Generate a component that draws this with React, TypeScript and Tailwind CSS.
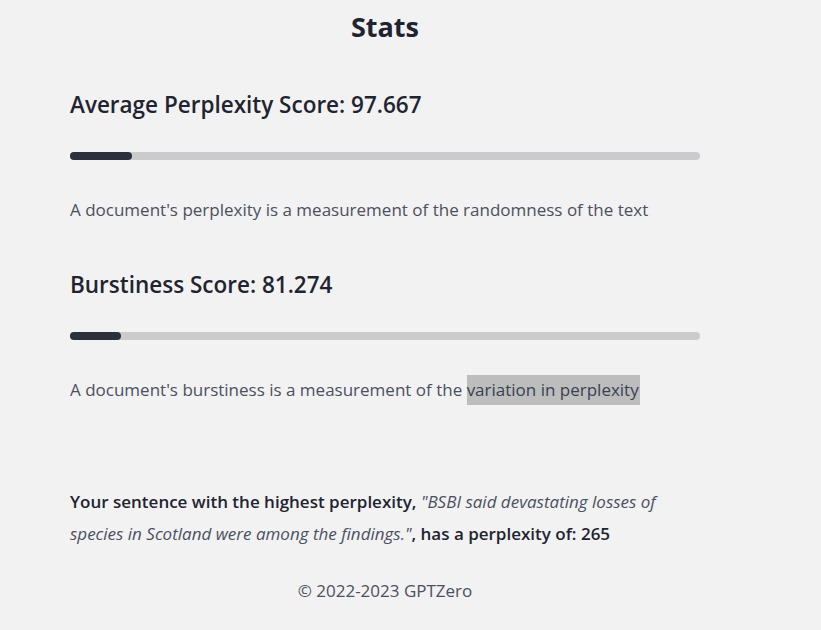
const STATS = [
  {
    label: 'Average Perplexity Score',
    value: '97.667',
    fill: 62,
    desc: "A document's perplexity is a measurement of the randomness of the text",
    mark: '',
  },
  {
    label: 'Burstiness Score',
    value: '81.274',
    fill: 51,
    desc: "A document's burstiness is a measurement of the ",
    mark: 'variation in perplexity',
  },
]

export default function App() {
  return (
    <div
      className="min-h-[630px] w-full bg-[#f2f2f2] text-[#1f2430]"
      style={{ fontFamily: '"Open Sans", "Noto Sans", sans-serif' }}
    >
      <div className="ml-[70px] w-[630px]">
        <h1 className="text-center text-[27px] font-bold leading-[54px]">Stats</h1>

        {STATS.map((s, i) => (
          <div key={s.label} className={i === 0 ? 'mt-[36px]' : 'mt-[45px]'}>
            <h2 className="text-[22.5px] font-semibold leading-[30px]">
              {s.label}: {s.value}
            </h2>
            {/* progress bar */}
            <div className="mt-[32px] h-[8px] w-full rounded-full bg-[#cbcbce]">
              <div className="h-full rounded-full bg-[#2c303c]" style={{ width: s.fill }} />
            </div>
            <p className="mt-[35px] text-[17px] leading-[30px] text-[#4b5060]">
              {s.desc}
              {s.mark && (
                <span className="inline-block bg-[#bdbdbd] pr-px text-[#374151]">{s.mark}</span>
              )}
            </p>
          </div>
        ))}

        <p className="mt-[81px] text-[17px] leading-[32px] font-semibold">
          Your sentence with the highest perplexity,{' '}
          <em className="font-normal text-[#4b5060]">
            "BSBI said devastating losses of species in Scotland were among the findings."
          </em>
          , has a perplexity of: 265
        </p>

        <p className="mt-[26px] text-center text-[17px] leading-[30px] text-[#4b5060]">
          © 2022-2023 GPTZero
        </p>
      </div>
    </div>
  )
}
